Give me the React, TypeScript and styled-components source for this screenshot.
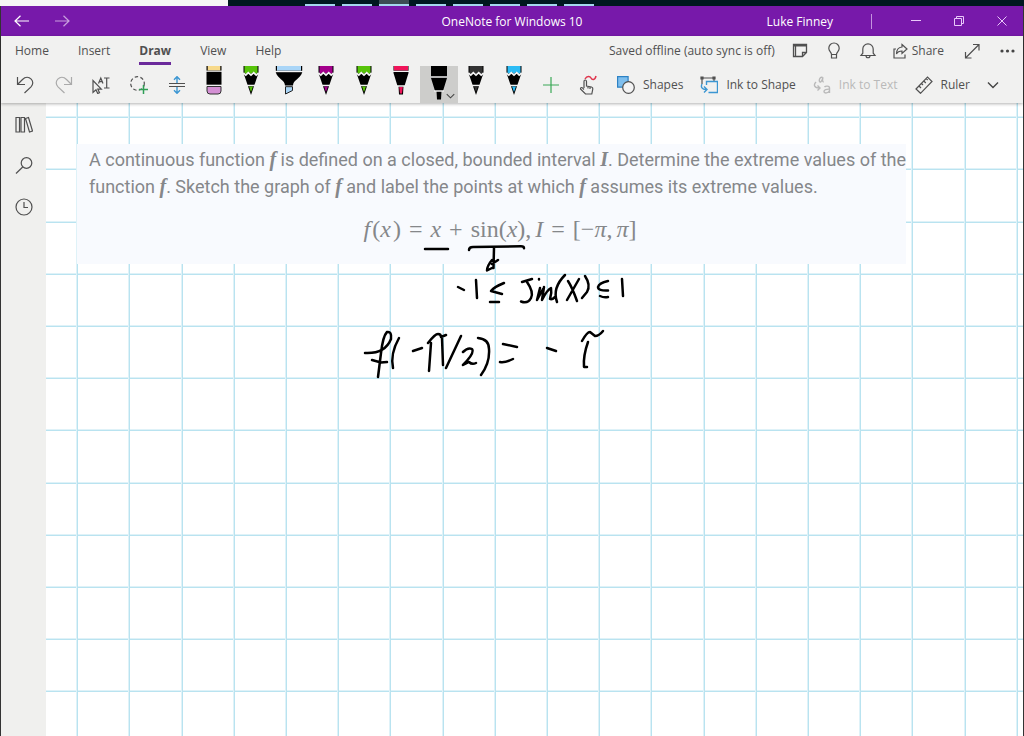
import React from "react";
import styled, { createGlobalStyle } from "styled-components";

const GlobalStyle = createGlobalStyle`
  * { box-sizing: border-box; }
  html, body, #root { height: 100%; }
  body {
    margin: 0;
    background: #333;
    color: #505050;
    font-family: "Open Sans", "Noto Sans", sans-serif;
    font-size: 12px;
    line-height: 16px;
  }
  button {
    border: 0;
    padding: 0;
    background: none;
    color: inherit;
    font: inherit;
    white-space: nowrap;
  }
  svg { display: block; flex: none; }
`;

const Screen = styled.div`
  display: flex;
  flex-direction: column;
  min-height: 100vh;
`;

const Taskbar = styled.div`
  display: flex;
  height: 6px;
  padding-left: 228px;
  background: linear-gradient(90deg, #f5f5f5 228px, #001820 228px);
`;

const TaskList = styled.div`
  display: flex;
  gap: 7px;
  padding-left: 77px;
`;

const Task = styled.div<{ $active?: boolean }>`
  width: 30px;
  border-bottom: 2px solid #a5d8ee;
  background: ${(p) => (p.$active ? "#3c4d54" : "transparent")};
`;

const Window = styled.div`
  display: flex;
  flex: 1;
  flex-direction: column;
  margin: 0 1px;
  background: #fff;
`;

const TitleBar = styled.header`
  display: grid;
  grid-template-columns: 1fr auto 1fr;
  align-items: center;
  height: 30px;
  background: #7719aa;
  color: #fff;
`;

const NavButtons = styled.div`
  display: flex;
  gap: 26px;
  padding-left: 13px;
`;

const NavButton = styled.button<{ $dim?: boolean }>`
  color: ${(p) => (p.$dim ? "#c9a0de" : "#fff")};
`;

const Title = styled.h1`
  margin: 0;
  padding-top: 2px;
  font-size: 12px;
  font-weight: 400;
`;

const Account = styled.div`
  display: flex;
  align-items: center;
  justify-content: flex-end;
`;

const UserName = styled.button`
  margin-right: 38px;
  padding-top: 2px;
`;

const TitleDivider = styled.span`
  width: 1px;
  height: 15px;
  margin-right: 22px;
  background: #c493df;
`;

const CaptionButton = styled.button`
  display: flex;
  justify-content: center;
  width: 43px;
  color: #e9c8fa;
`;

const Ribbon = styled.div`
  position: relative;
  background: #f1f1f0;
  box-shadow: 0 1px 3px #0000004d;
`;

const TabRow = styled.div`
  display: flex;
  align-items: center;
  justify-content: space-between;
  height: 30px;
  padding: 0 8px 0 14px;
`;

const Tabs = styled.nav`
  display: flex;
  gap: 29px;
`;

const Tab = styled.button<{ $active?: boolean }>`
  height: 28px;
  padding-top: 3px;
  border-bottom: 3px solid ${(p) => (p.$active ? "#6b2a9b" : "transparent")};
  font-weight: ${(p) => (p.$active ? 700 : 400)};
`;

const StatusArea = styled.div`
  display: flex;
  align-items: center;
  gap: 16px;
`;

const StatusButton = styled.button`
  display: flex;
  align-items: center;
  gap: 4px;
`;

const ToolRow = styled.div`
  display: flex;
  height: 37px;
  padding: 0 26px 0 5px;
`;

const ToolGroup = styled.div<{ $count: number; $width: number }>`
  display: grid;
  grid-template-columns: repeat(${(p) => p.$count}, 1fr);
  flex: 0 0 ${(p) => p.$width}px;
`;

const Divider = styled.span`
  width: 1px;
  height: 33px;
  margin-right: -1px;
  background: #cfcfcf;
`;

const ToolButton = styled.button`
  display: flex;
  align-items: center;
  justify-content: center;
`;

const PenButton = styled.button<{ $selected?: boolean }>`
  position: relative;
  display: flex;
  justify-content: center;
  align-items: flex-start;
  background: ${(p) => (p.$selected ? "#cdcdcb" : "transparent")};
`;

const PenMenuMark = styled.span`
  position: absolute;
  right: 3px;
  bottom: 3px;
`;

const Commands = styled.div`
  display: flex;
  flex: 1;
  align-items: center;
  gap: 17px;
  padding-left: 10px;
`;

const TouchButton = styled(ToolButton)`
  margin-right: 3px;
`;

const Command = styled.button<{ $disabled?: boolean }>`
  display: flex;
  align-items: center;
  gap: 8px;
  color: ${(p) => (p.$disabled ? "#b9b9b9" : "#505050")};
`;

const MoreTools = styled.button`
  margin-left: auto;
`;

const Body = styled.div`
  display: flex;
  flex: 1;
`;

const Sidebar = styled.aside`
  display: flex;
  flex-direction: column;
  align-items: center;
  gap: 21px;
  width: 45px;
  padding-top: 12px;
  background: #f0f0ee;
`;

const stops = [0, 52, 105, 157, 209];
const grid = (dir: string) =>
  `repeating-linear-gradient(${dir}, ${stops
    .map(
      (s, i) =>
        `#dff2f8 ${s}px ${s + 1}px, #b9e3f0 ${s + 1}px ${s + 2}px, transparent ${s + 2}px ${stops[i + 1] ?? 261}px`,
    )
    .join(", ")})`;

const Page = styled.main`
  flex: 1;
  padding: 41px 31px 0;
  background-color: #fff;
  background-image: ${grid("to right")}, ${grid("to bottom")};
  background-position: 30px 0, 0 13px;
  background-size: 261px 100%, 100% 261px;
`;

const Note = styled.article`
  position: relative;
  max-width: 829px;
  height: 120px;
  padding: 2px 0 0 12px;
  background: #f8fafe;
  color: #85878a;
  font-family: Roboto, sans-serif;
  font-size: 18px;
  line-height: 27px;
`;

const Statement = styled.p`
  margin: 0;
  white-space: nowrap;
`;

const Line = styled.span`
  display: block;
`;

const Var = styled.i`
  font-family: "Liberation Serif", serif;
  font-size: 20px;
  font-weight: 700;
  line-height: 20px;
`;

const Formula = styled.p`
  display: flex;
  justify-content: center;
  margin: 16px 0 0;
  padding-left: 5px;
  font-family: "Liberation Serif", serif;
  font-size: 24px;
`;

const Name = styled.i`
  margin-right: 2px;
`;

const Operator = styled.span`
  margin: 0 8px;
`;

const Comma = styled.span`
  margin-right: 4px;
`;

const Ink = styled.svg`
  position: absolute;
  left: 273px;
  top: 91px;
  overflow: visible;
`;

const Icon = ({ w = 18, h = 18, sw = 1.2, children }: { w?: number; h?: number; sw?: number; children: React.ReactNode }) => (
  <svg width={w} height={h} viewBox={`0 0 ${w} ${h}`} fill="none" stroke="currentColor" strokeWidth={sw} aria-hidden="true">
    {children}
  </svg>
);

const Pencil = ({ color }: { color: string }) => (
  <svg width="16" height="30" viewBox="0 0 16 30" aria-hidden="true">
    <path d="M.5 0h15v7L8 29 .5 7z" fill="#000" />
    <path d="M1.500 0h13v7l-2.200 1-2.200-2-2.100 2-2.100-2-2.200 2-2.200-1z" fill={color} />
    <path d="M.3 7l2.500 2.200 2.500-2.500L8 9.200l2.700-2.500 2.500 2.500L15.700 7" fill="none" stroke="#f5f5f5" strokeWidth="1.700" />
    <path d="M3 19.500h10" stroke="#f1f1f0" strokeWidth="1.500" />
    <path d="M6 20.500h4L8 26z" fill={color} />
  </svg>
);

const Marker = ({ color }: { color: string }) => (
  <svg width="16" height="30" viewBox="0 0 16 30" aria-hidden="true">
    <path d="M.5 0h15v7l-4 13h-1L10 28.500H6L5.500 20h-1L.5 7z" fill="#000" />
    <path d="M1 0h14v4.600H1zM6.200 21h3.600L9 27.500H7z" fill={color} />
    <path d="M0 5.400h16M3 20h10" stroke="#f4f4f4" strokeWidth="1.400" />
  </svg>
);

const BigMarker = () => (
  <svg width="16" height="34" viewBox="0 0 16 34" aria-hidden="true">
    <path d="M0 0h16v12l-4 13h-1.500L10 33.500H6L5.500 25H4L0 12z" fill="#000" />
    <path d="M0 11h16M3 25h10" stroke="#eee" strokeWidth="1.300" />
  </svg>
);

const Highlighter = () => (
  <svg width="28" height="30" viewBox="0 0 28 30" aria-hidden="true">
    <path d="M.8 0h26.400v6.500C25 13 18 14 18 19.500h-8C10 14 3 13 .8 6.500z" fill="#000" />
    <path d="M2 0h24v4.700H2z" fill="#a9d5f7" />
    <path d="M0 5.500h28" stroke="#f4f4f4" strokeWidth="1.400" />
    <path d="M10.500 20.700h7v3.800l-7 3.500z" fill="#a9d5f7" stroke="#222" />
  </svg>
);

const Eraser = () => (
  <svg width="16" height="30" viewBox="0 0 16 30" aria-hidden="true">
    <path d="M.5 0h15v18.700H.5z" fill="#000" />
    <path d="M1.700 0h12.600v4.500H1.700z" fill="#f7d98a" />
    <path d="M0 5.200h16" stroke="#f4f4f4" strokeWidth="1.200" />
    <path d="M1 20.500h14V25q0 3-3 3H4q-3 0-3-3z" fill="#d490d4" stroke="#333" />
  </svg>
);

const pens = [
  { name: "Eraser", art: <Eraser /> },
  { name: "Green pencil", art: <Pencil color="#57c40a" /> },
  { name: "Highlighter", art: <Highlighter /> },
  { name: "Purple pencil", art: <Pencil color="#a4008c" /> },
  { name: "Lime pencil", art: <Pencil color="#57c40a" /> },
  { name: "Red pen", art: <Marker color="#f0145a" /> },
  { name: "Black pen", art: <BigMarker />, selected: true },
  { name: "Gray pencil", art: <Pencil color="#333" /> },
  { name: "Blue pencil", art: <Pencil color="#2cbcf5" /> },
];

const Chevron = ({ w = 12 }: { w?: number }) => (
  <svg width={w} height="8" viewBox="0 0 12 8" fill="none" stroke="#444" strokeWidth="1.4" aria-hidden="true">
    <path d="M1 1.500l5 5 5-5" />
  </svg>
);

export default function App() {
  return (
    <Screen>
      <GlobalStyle />
      <Taskbar>
        <TaskList>
          {[0, 1, 2, 3, 4, 5, 6, 7].map((n) => (
            <Task key={n} $active={n === 2} />
          ))}
        </TaskList>
      </Taskbar>
      <Window>
        <TitleBar>
          <NavButtons>
            <NavButton aria-label="Back">
              <Icon w={15} h={12}><path d="M15 6H1M6.500 .8L1 6l5.500 5.200" /></Icon>
            </NavButton>
            <NavButton aria-label="Forward" $dim>
              <Icon w={15} h={12}><path d="M0 6h14M8.500 .8L14 6l-5.500 5.200" /></Icon>
            </NavButton>
          </NavButtons>
          <Title>OneNote for Windows 10</Title>
          <Account>
            <UserName>Luke Finney</UserName>
            <TitleDivider />
            <CaptionButton aria-label="Minimize"><Icon w={10} h={10} sw={1}><path d="M0 4.500h10" /></Icon></CaptionButton>
            <CaptionButton aria-label="Restore">
              <Icon w={10} h={10} sw={1}><path d="M.5 2.500h7v7h-7zM2.500 2.500v-2h7v7h-2" /></Icon>
            </CaptionButton>
            <CaptionButton aria-label="Close"><Icon w={10} h={10} sw={1}><path d="M.5 .5l9 9M9.500 .5l-9 9" /></Icon></CaptionButton>
          </Account>
        </TitleBar>

        <Ribbon>
          <TabRow>
            <Tabs>
              {["Home", "Insert", "Draw", "View", "Help"].map((t) => (
                <Tab key={t} $active={t === "Draw"}>{t}</Tab>
              ))}
            </Tabs>
            <StatusArea>
              <span>Saved offline (auto sync is off)</span>
              <StatusButton aria-label="Feed">
                <Icon w={18} sw={1.300}>
                  <path d="M2.500 2.500h13v8l-4 4h-9zM15.500 10.500h-4v4M4.500 2.500v12" />
                  <path d="M2.500 3.500h13" strokeWidth="2" />
                </Icon>
              </StatusButton>
              <StatusButton aria-label="Tell me">
                <Icon><path d="M6.500 12.500c0-2.500-2.700-3-2.700-6.300a5 5 0 0 1 10.400 0c0 3.300-2.700 3.800-2.700 6.300zM6.500 12.500v3.500h5v-3.500" /></Icon>
              </StatusButton>
              <StatusButton aria-label="Notifications">
                <Icon><path d="M2 13.500h14l-1.800-2.300V7a5.200 5.200 0 0 0-10.400 0v4.200zM7 13.500c0 3 4 3 4 0" /></Icon>
              </StatusButton>
              <StatusButton>
                <Icon w={15} h={16}>
                  <path d="M3 6H1v9h11v-3.500M9 1.500l5 4.500-5 4.500V8C6 8 4.500 9 3.500 11 3.500 7 5.500 4.300 9 4z" />
                </Icon>
                Share
              </StatusButton>
              <StatusButton aria-label="Full screen">
                <Icon w={24}><path d="M6 15.500L18.500 3M13 2.500h6v6M11.500 16H5.500v-6" /></Icon>
              </StatusButton>
              <StatusButton aria-label="More">
                <svg width="15" height="4" viewBox="0 0 15 4" fill="#444" aria-hidden="true">
                  <circle cx="2" cy="2" r="1.600" /><circle cx="7.500" cy="2" r="1.600" /><circle cx="13" cy="2" r="1.600" />
                </svg>
              </StatusButton>
            </StatusArea>
          </TabRow>

          <ToolRow>
            <ToolGroup $count={2} $width={77}>
              <ToolButton aria-label="Undo">
                <Icon><path d="M1.500 1v7.500H9M1.500 8.500L6.500 3.500c3-3 6.500-2.500 8.700-.3s2 5.500-.2 7.700L8.500 17" /></Icon>
              </ToolButton>
              <ToolButton aria-label="Redo">
                <Icon><path stroke="#aaa" d="M16.500 1v7.500H9M16.500 8.500L11.500 3.500c-3-3-6.500-2.500-8.700-.3s-2 5.500.2 7.700L9.500 17" /></Icon>
              </ToolButton>
            </ToolGroup>
            <Divider />
            <ToolGroup $count={3} $width={114}>
              <ToolButton aria-label="Select objects or type text">
                <Icon>
                  <path d="M1 4.500v12l3-2.700 1.700 3.700 1.800-.8-1.700-3.600h3.500z" />
                  <path d="M12 2h5.500M12 12h5.500M14.700 2v10M6.500 7.500L8.800 2l2.200 5.500M7.300 5.700h3" />
                </Icon>
              </ToolButton>
              <ToolButton aria-label="Lasso select">
                <Icon>
                  <circle cx="7.500" cy="7.500" r="6.800" strokeDasharray="3.500 2.300" />
                  <path stroke="#2f9e55" strokeWidth="1.500" d="M13.500 9v9M9 13.500h9" />
                </Icon>
              </ToolButton>
              <ToolButton aria-label="Insert or remove space">
                <Icon>
                  <path d="M1 7.500h16M1 10.500h16" />
                  <path stroke="#3b96d2" strokeWidth="1.400" d="M9 7V1M6 3.700l3-3 3 3M9 11v6M6 14.300l3 3 3-3" />
                </Icon>
              </ToolButton>
            </ToolGroup>
            <Divider />
            <ToolGroup $count={10} $width={375}>
              {pens.map((p) => (
                <PenButton key={p.name} aria-label={p.name} $selected={p.selected}>
                  {p.art}
                  {p.selected && <PenMenuMark><Chevron w={9} /></PenMenuMark>}
                </PenButton>
              ))}
              <ToolButton aria-label="Add pen">
                <Icon><path stroke="#3aa856" d="M9 1v16M1 9h16" /></Icon>
              </ToolButton>
            </ToolGroup>
            <Divider />
            <Commands>
              <TouchButton aria-label="Draw with mouse or touch">
                <Icon w={18} h={20}>
                  <path stroke="#e0364e" strokeWidth="1.500" d="M6 4c2-3.500 5-3 6-1s4 2.500 5-2" />
                  <path d="M5 13V6.500Q5 5 6.200 5t1.300 1.500V11l5 1q1.500.5 1.300 2l-1 5H6.500L1.500 14q0-2 1.700-1.300L5 14.500M9 11.500v2M11 12v2" />
                </Icon>
              </TouchButton>
              <Command>
                <Icon>
                  <path fill="#7fbfee" stroke="#2d82c4" d="M.6 .6h10.500v10.500H.6z" />
                  <circle cx="11.500" cy="11.500" r="5.800" fill="#f4f4f4" />
                </Icon>
                Shapes
              </Command>
              <Command>
                <Icon>
                  <path d="M2 2h12M2 2v6M14 2v3" />
                  <path fill="currentColor" d="M1 1h2v2H1zM13 1h2v2h-2z" />
                  <path stroke="#3b96d2" strokeWidth="1.400" d="M6.500 9V5.500h11v11h-9M2 8c-1.500 3 0 5.500 4 5.500M4 10.500l3 3-3 3" />
                </Icon>
                Ink to Shape
              </Command>
              <Command $disabled aria-disabled="true">
                <Icon sw={1.400}>
                  <path d="M9.500 1.500c-3-1.500-4.500 5-1.800 4.500C9 5.500 9.500 3 10 1.200 9.500 3 9 6 10.700 6" />
                  <path d="M3 6c-3 3-1.500 6 3.500 6M4.500 9.500L7 12l-2.500 2.500" />
                  <path d="M11.500 11c1-1.200 5-1.500 5 1V17M16.500 13.200c-3-.2-5.500.5-5.500 2.200 0 2.300 4.500 2 5.500-.7" />
                </Icon>
                Ink to Text
              </Command>
              <Command>
                <Icon>
                  <path d="M1 13L12.500 1 17 5.500 5.500 17.300zM4 10l2 2M6.500 7.500L8 9M8.800 5l2 2M11.200 2.600L12.700 4" />
                </Icon>
                Ruler
              </Command>
              <MoreTools aria-label="More tools"><Chevron /></MoreTools>
            </Commands>
          </ToolRow>
        </Ribbon>

        <Body>
          <Sidebar>
            <ToolButton aria-label="Notebooks">
              <Icon w={18} h={20}>
                <path d="M1 2.500h3.500v14.500H1zM6 2.500h3.500v14.500H6zM10.500 3.500l3-1L17.500 16l-3 1z" />
              </Icon>
            </ToolButton>
            <ToolButton aria-label="Search">
              <Icon w={18} h={20}><circle cx="11.500" cy="7" r="5.300" /><path d="M7.700 11L1 17.500" /></Icon>
            </ToolButton>
            <ToolButton aria-label="Recent notes">
              <Icon w={18} h={20}><circle cx="9" cy="10" r="8" /><path d="M9 5v5.500h4" /></Icon>
            </ToolButton>
          </Sidebar>
          <Page>
            <Note>
              <Statement>
                <Line>
                  A continuous function <Var>f</Var> is defined on a closed, bounded interval <Var>I</Var>. Determine the extreme values of the
                </Line>
                <Line>
                  function <Var>f</Var>. Sketch the graph of <Var>f</Var> and label the points at which <Var>f</Var> assumes its extreme values.
                </Line>
              </Statement>
              <Formula>
                <Name>f</Name>(<Name>x</Name>)<Operator>=</Operator><i>x</i><Operator>+</Operator>sin(<i>x</i>)<Comma>,</Comma><i>I</i>
                <Operator>=</Operator>[−<i>π</i><Comma>,</Comma><i>π</i>]
              </Formula>
              <Ink width="300" height="150" viewBox="350 235 300 150" fill="none" stroke="#000" strokeWidth="2.500" strokeLinecap="round" strokeLinejoin="round" role="img" aria-label="Handwritten working">
                <path d="M425 249h23M469 250q0-3 4-3l48-.8q3 0 3 2M494 248l-.5 20M498 260l-6 4M492 260q-5 6-5 10.500l6-3" />
                <path d="M458 287l6 3M476 280l1 18M504 283q-10 4-13 8l11 3M490 302h9" />
                <path d="M522 282l10-3M527 282q7 10 4 16-3 6-10 3.500M540 288l-3 12 6-11M539 279v.5M544 287l-2 13q5-10 9-12 1 5-1 11 2 1 5-2M565 275q-13 13-8 27M568 281q4 6 9 20M579 279l-12 21M585 276q6 9 2 16l-5 6" />
                <path d="M608 281q-9 2-10 6 0 4 10 3.500M600 296q4 2 8 1M622 279l1 17" />
                <path d="M365 353q20 1 26-14 1-8-4-7-4 4-6 21l-3 24M372 360l9 2.500 6-.5M399 338q-9 16-6 30M413 351l9-3" />
                <path d="M431 343l-2 28M428 343q7-9 10-9t3 3l5-2M442 338l1 27M461 336l-15 32M463 352q5-5 9-3 3 4-9 16l6-3q3 3 7 1M478 338q11 1 11 11 1 14-8 26M503 344l14 3M500 362q5 1 13-3" />
                <path d="M547 348l9 3M588 342q-5 14-4 25l3 0M582 341q5-9 8-9l5 4q4 0 8-5" />
              </Ink>
            </Note>
          </Page>
        </Body>
      </Window>
    </Screen>
  );
}
